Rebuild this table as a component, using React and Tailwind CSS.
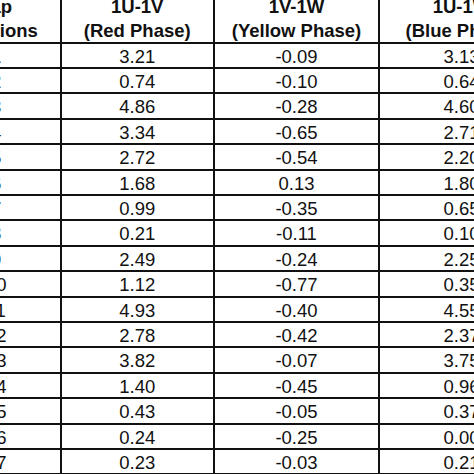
const rows = [
  ["1", "3.21", "-0.09", "3.13"],
  ["2", "0.74", "-0.10", "0.64"],
  ["3", "4.86", "-0.28", "4.60"],
  ["4", "3.34", "-0.65", "2.71"],
  ["5", "2.72", "-0.54", "2.20"],
  ["6", "1.68", "0.13", "1.80"],
  ["7", "0.99", "-0.35", "0.65"],
  ["8", "0.21", "-0.11", "0.10"],
  ["9", "2.49", "-0.24", "2.25"],
  ["10", "1.12", "-0.77", "0.35"],
  ["11", "4.93", "-0.40", "4.55"],
  ["12", "2.78", "-0.42", "2.37"],
  ["13", "3.82", "-0.07", "3.75"],
  ["14", "1.40", "-0.45", "0.96"],
  ["15", "0.43", "-0.05", "0.37"],
  ["16", "0.24", "-0.25", "0.00"],
  ["17", "0.23", "-0.03", "0.21"],
];

const headers = [
  ["Tap", "Positions"],
  ["1U-1V", "(Red Phase)"],
  ["1V-1W", "(Yellow Phase)"],
  ["1U-1W", "(Blue Phase)"],
];

const widths = ["w-[128.5px]", "w-[153.5px]", "w-[165px]", "w-[165px]"];

const App = () => {
  return (
    <div
      className="w-[474px] h-[474px] overflow-hidden bg-white text-[#111] text-[18.5px]"
      style={{ fontFamily: '"Liberation Sans", Arial, sans-serif' }}
    >
      <div className="ml-[-67px] mt-[-3.1px] w-[612px]">
        <div className="flex border-b-2 border-[#111]">
          {headers.map((h, i) => (
            <div
              key={i}
              className={`${widths[i]} shrink-0 border-r-2 border-[#111] flex flex-col items-center pb-[0.6px] font-bold`}
            >
              <div className="leading-[20px] whitespace-nowrap">{h[0]}</div>
              <div className="leading-[20px] mt-[4.2px] whitespace-nowrap">{h[1]}</div>
            </div>
          ))}
        </div>
        {rows.map((r, ri) => (
          <div key={ri} className="flex border-b-2 border-[#111]">
            {r.map((c, ci) => (
              <div
                key={ci}
                className={`${widths[ci]} shrink-0 h-[23.4px] border-r-2 border-[#111] text-center pt-[3px] leading-[20.4px] whitespace-nowrap`}
              >
                {c}
              </div>
            ))}
          </div>
        ))}
      </div>
    </div>
  );
};

export default App;
